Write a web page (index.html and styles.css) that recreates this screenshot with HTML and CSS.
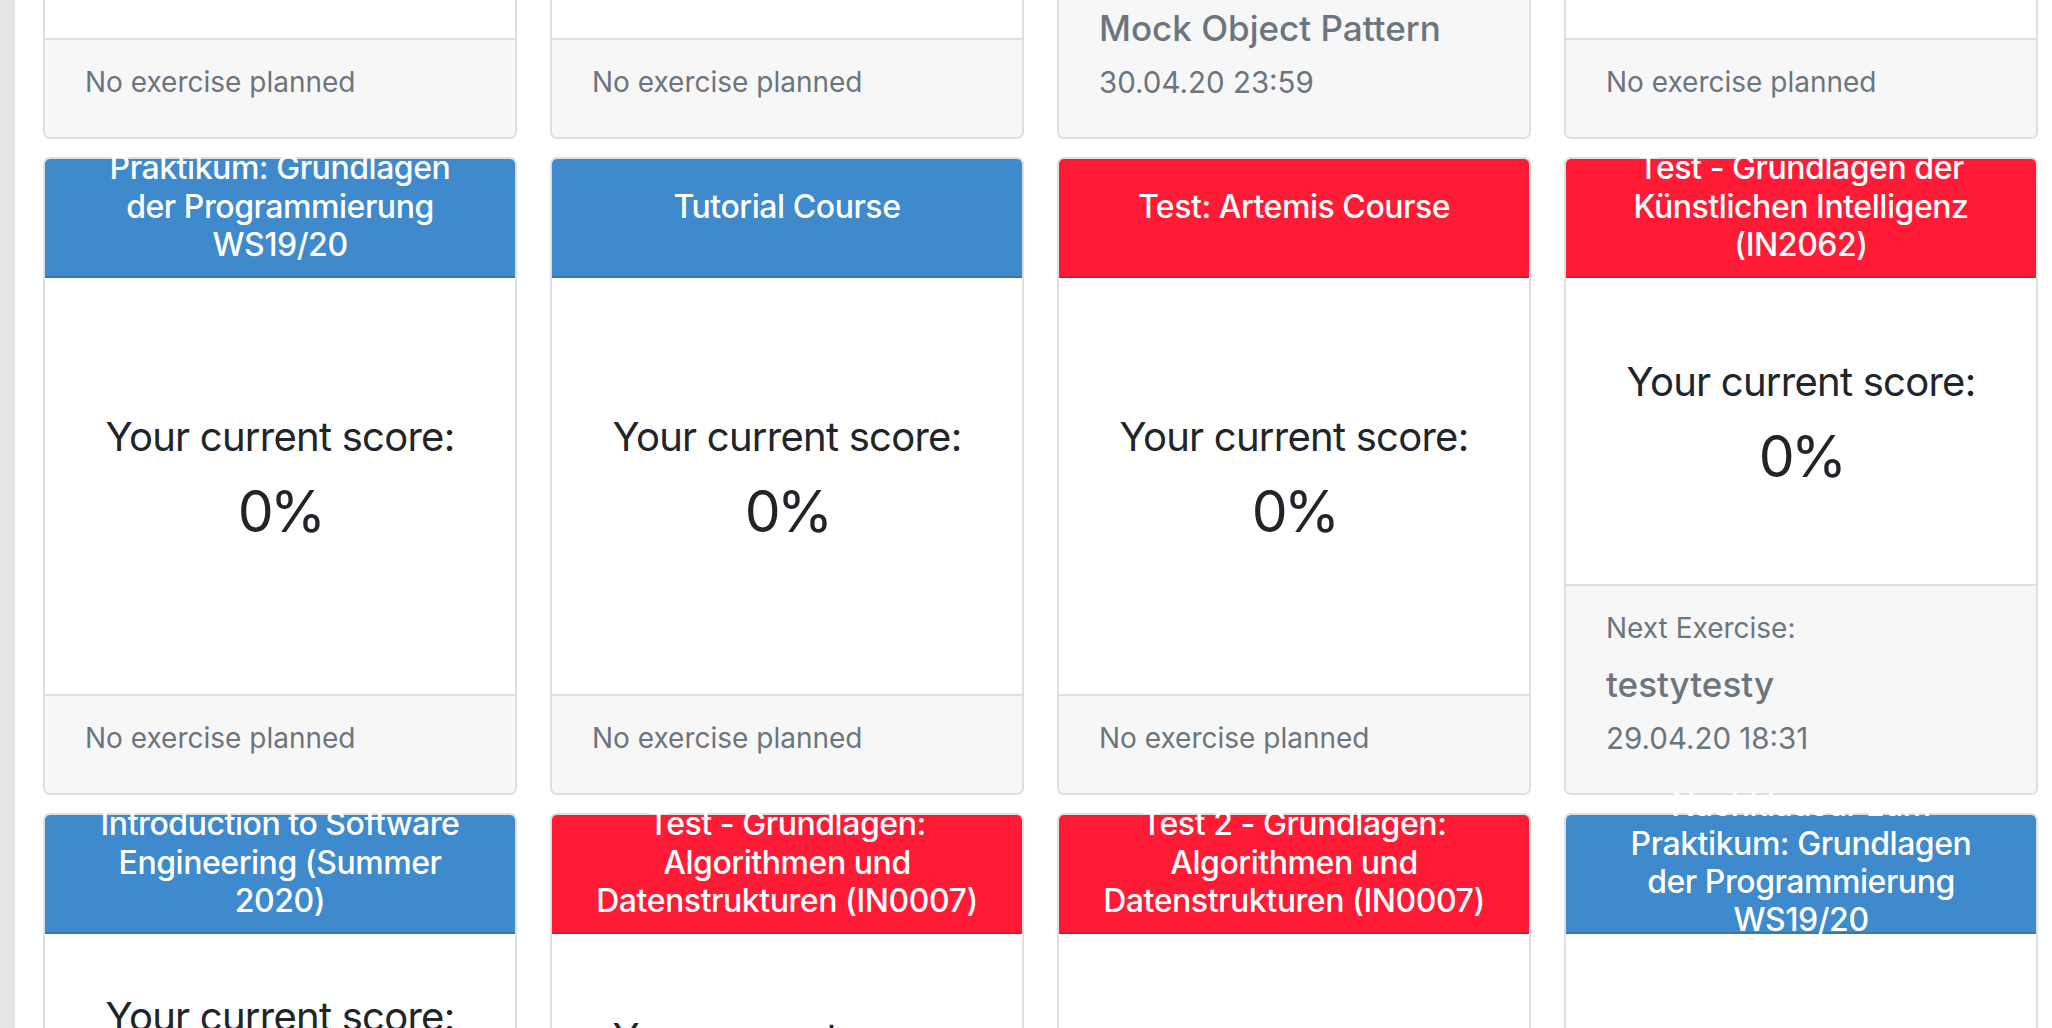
FILE: index.html
```html
<!DOCTYPE html>
<html lang="en">
<head>
<meta charset="utf-8">
<title>Courses</title>
<link rel="stylesheet" href="styles.css">
</head>
<body>
<div class="layout">
  <div class="edge"></div>
  <main class="main">
    <div class="course-grid">
      <!-- row 1 (scrolled mostly out of view) -->
      <div class="card">
        <div class="card-body"></div>
        <div class="card-footer"><p class="footer-line">No exercise planned</p></div>
      </div>
      <div class="card">
        <div class="card-body"></div>
        <div class="card-footer"><p class="footer-line">No exercise planned</p></div>
      </div>
      <div class="card">
        <div class="card-body"></div>
        <div class="card-footer">
          <p class="footer-label">Next Exercise:</p>
          <p class="footer-title">Mock Object Pattern</p>
          <p class="footer-date">30.04.20 23:59</p>
        </div>
      </div>
      <div class="card">
        <div class="card-body"></div>
        <div class="card-footer"><p class="footer-line">No exercise planned</p></div>
      </div>

      <!-- row 2 -->
      <div class="card">
        <div class="card-header card-header--blue"><h4 class="card-title">Praktikum: Grundlagen der Programmierung WS19/20</h4></div>
        <div class="card-body">
          <h4 class="score-label">Your current score:</h4>
          <h2 class="score-value">0%</h2>
        </div>
        <div class="card-footer"><p class="footer-line">No exercise planned</p></div>
      </div>
      <div class="card">
        <div class="card-header card-header--blue"><h4 class="card-title">Tutorial Course</h4></div>
        <div class="card-body">
          <h4 class="score-label">Your current score:</h4>
          <h2 class="score-value">0%</h2>
        </div>
        <div class="card-footer"><p class="footer-line">No exercise planned</p></div>
      </div>
      <div class="card">
        <div class="card-header card-header--red"><h4 class="card-title">Test: Artemis Course</h4></div>
        <div class="card-body">
          <h4 class="score-label">Your current score:</h4>
          <h2 class="score-value">0%</h2>
        </div>
        <div class="card-footer"><p class="footer-line">No exercise planned</p></div>
      </div>
      <div class="card">
        <div class="card-header card-header--red"><h4 class="card-title">Test - Grundlagen der Künstlichen Intelligenz (IN2062)</h4></div>
        <div class="card-body">
          <h4 class="score-label">Your current score:</h4>
          <h2 class="score-value">0%</h2>
        </div>
        <div class="card-footer">
          <p class="footer-label">Next Exercise:</p>
          <p class="footer-title">testytesty</p>
          <p class="footer-date">29.04.20 18:31</p>
        </div>
      </div>

      <!-- row 3 -->
      <div class="card">
        <div class="card-header card-header--blue"><h4 class="card-title">Introduction to Software Engineering (Summer 2020)</h4></div>
        <div class="card-body">
          <h4 class="score-label">Your current score:</h4>
          <h2 class="score-value">0%</h2>
        </div>
        <div class="card-footer">
          <p class="footer-label">Next Exercise:</p>
          <p class="footer-title">Exercise 01: Software Engineering Basics</p>
          <p class="footer-date">07.05.20 23:59</p>
        </div>
      </div>
      <div class="card">
        <div class="card-header card-header--red"><h4 class="card-title">Test - Grundlagen: Algorithmen und Datenstrukturen (IN0007)</h4></div>
        <div class="card-body">
          <h4 class="score-label">Your current score:</h4>
          <h2 class="score-value">0%</h2>
        </div>
        <div class="card-footer">
          <p class="footer-label">Next Exercise:</p>
          <p class="footer-title">Sortieralgorithmen</p>
          <p class="footer-date">04.05.20 23:59</p>
        </div>
      </div>
      <div class="card">
        <div class="card-header card-header--red"><h4 class="card-title">Test 2 - Grundlagen: Algorithmen und Datenstrukturen (IN0007)</h4></div>
        <div class="card-body">
          <h4 class="score-label">Your current score:</h4>
          <h2 class="score-value">0%</h2>
        </div>
        <div class="card-footer"><p class="footer-line">No exercise planned</p></div>
      </div>
      <div class="card">
        <div class="card-header card-header--blue"><h4 class="card-title">Nachklausur zum Praktikum: Grundlagen der Programmierung WS19/20</h4></div>
        <div class="card-body">
          <h4 class="score-label">Your current score:</h4>
          <h2 class="score-value">0%</h2>
        </div>
        <div class="card-footer"><p class="footer-line">No exercise planned</p></div>
      </div>
    </div>
  </main>
</div>
</body>
</html>
```

FILE: styles.css
```css
* {
  box-sizing: border-box;
}

html,
body {
  margin: 0;
  padding: 0;
}

body {
  font-family: Inter, "Helvetica Neue", "Liberation Sans", Arial, sans-serif;
  color: #212529;
  background: #ffffff;
  overflow: hidden;
}

.layout {
  display: flex;
  height: 1028px;
  overflow: hidden;
}

.edge {
  flex: none;
  width: 15px;
  background: #e4e5e6;
}

.main {
  flex: 1;
  padding-left: 28px;
}

/* the page is scrolled: the first row sits mostly above the viewport */
.course-grid {
  display: grid;
  grid-template-columns: repeat(4, 474px);
  column-gap: 33px;
  row-gap: 18px;
  margin-top: -499px;
}

.card {
  height: 638px;
  display: flex;
  flex-direction: column;
  background: #ffffff;
  border: 2px solid #dfdfdf;
  border-radius: 7px;
}

.card-header {
  flex: none;
  height: 119px;
  display: flex;
  align-items: center;
  justify-content: center;
  padding: 0 40px 21px;
  border-bottom: 2px solid rgba(0, 0, 0, 0.125);
  border-radius: 5px 5px 0 0;
  color: #ffffff;
}

.card-header--blue {
  background: #3e8acc;
}

.card-header--red {
  background: #ff1a35;
}

.card-title {
  margin: 0;
  font-size: 32px;
  font-weight: 500;
  line-height: 1.2;
  letter-spacing: -0.45px;
  text-align: center;
}

.card-body {
  flex: 1;
  display: flex;
  flex-direction: column;
  align-items: center;
  justify-content: center;
  text-align: center;
}

.score-label {
  margin: 0 0 17px;
  font-size: 40px;
  font-weight: 400;
  line-height: 1.2;
  letter-spacing: -0.75px;
}

.score-value {
  margin: 0 0 13px;
  font-size: 57px;
  font-weight: 400;
  line-height: 1.2;
  letter-spacing: -3.6px;
}

.card-footer {
  flex: none;
  padding: 21px 40px 34px;
  background: #f7f7f7;
  border-top: 2px solid #dfdfdf;
  border-radius: 0 0 5px 5px;
  color: #6c757d;
  font-size: 28px;
  line-height: 42px;
}

.footer-line {
  margin: 0;
}

.footer-label {
  margin: 0 0 14px;
}

.footer-title {
  margin: 0 0 12px;
  font-size: 35px;
  font-weight: 500;
  line-height: 1.2;
}

.footer-date {
  margin: 0;
  font-size: 29.5px;
}
```
